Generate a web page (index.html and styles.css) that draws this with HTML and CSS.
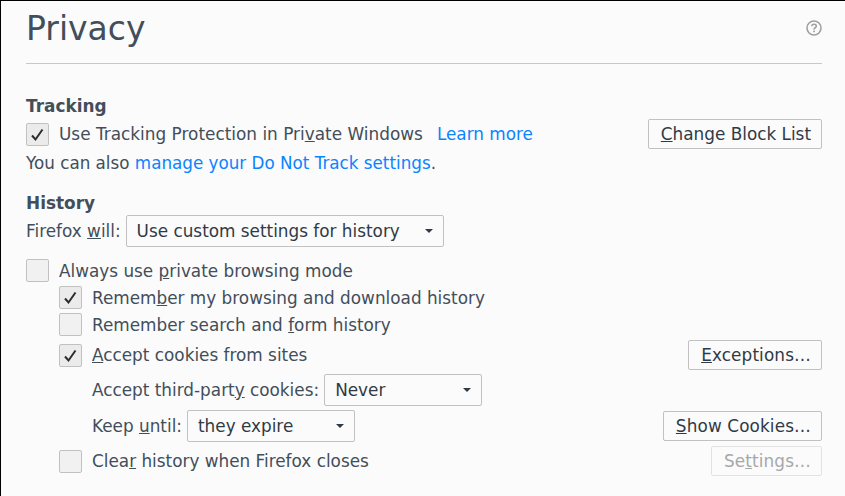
FILE: index.html
```html
<!DOCTYPE html>
<html lang="en">
<head>
<meta charset="utf-8">
<title>Privacy</title>
<link rel="stylesheet" href="styles.css">
</head>
<body>
<main class="pane">
  <header class="header">
    <h1 class="title">Privacy</h1>
    <svg class="help" width="16" height="16" viewBox="0 0 16 16" aria-hidden="true">
      <circle cx="8" cy="8" r="7" fill="none" stroke="#a0a0a0" stroke-width="1.6"/>
      <path d="M5.8 6.3c0-1.3 1-2.1 2.3-2.1s2.2.8 2.2 1.9c0 1.7-2.2 1.6-2.2 3.3" fill="none" stroke="#a0a0a0" stroke-width="1.6"/>
      <rect x="7.2" y="10.5" width="1.7" height="1.7" fill="#a0a0a0"/>
    </svg>
  </header>

  <section class="tracking">
    <h2 class="heading">Tracking</h2>
    <div class="row row-tp">
      <span class="check on"><svg width="15" height="15" viewBox="0 0 15 15"><path d="M2 8.5l3.5 4L12.5 2.5" fill="none" stroke="#2c2c2c" stroke-width="2"/></svg></span>
      <span class="label">Use Tracking Protection in Pri<u>v</u>ate Windows</span>
      <a class="link learn">Learn more</a>
      <button class="btn"><u>C</u>hange Block List</button>
    </div>
    <p class="line">You can also <a class="link">manage your Do Not Track settings</a>.</p>
  </section>

  <section class="history">
    <h2 class="heading">History</h2>
    <div class="row row-will">
      <span class="label">Firefox <u>w</u>ill:</span>
      <span class="select sel-history">Use custom settings for history<i class="arrow"></i></span>
    </div>
    <div class="row row-always">
      <span class="check"></span>
      <span class="label">Always use <u>p</u>rivate browsing mode</span>
    </div>
    <div class="indent">
      <div class="row row-r1">
        <span class="check on"><svg width="15" height="15" viewBox="0 0 15 15"><path d="M2 8.5l3.5 4L12.5 2.5" fill="none" stroke="#2c2c2c" stroke-width="2"/></svg></span>
        <span class="label">Remem<u>b</u>er my browsing and download history</span>
      </div>
      <div class="row row-r2">
        <span class="check"></span>
        <span class="label">Remember search and <u>f</u>orm history</span>
      </div>
      <div class="row row-cookies">
        <span class="check on"><svg width="15" height="15" viewBox="0 0 15 15"><path d="M2 8.5l3.5 4L12.5 2.5" fill="none" stroke="#2c2c2c" stroke-width="2"/></svg></span>
        <span class="label"><u>A</u>ccept cookies from sites</span>
        <button class="btn ell"><u>E</u>xceptions…</button>
      </div>
      <div class="row row-third sub">
        <span class="label">Accept third-part<u>y</u> cookies:</span>
        <span class="select sel-never">Never<i class="arrow"></i></span>
      </div>
      <div class="row row-keep sub">
        <span class="label">Keep <u>u</u>ntil:</span>
        <span class="select sel-expire">they expire<i class="arrow"></i></span>
        <button class="btn ell"><u>S</u>how Cookies…</button>
      </div>
      <div class="row row-clear">
        <span class="check"></span>
        <span class="label">Clea<u>r</u> history when Firefox closes</span>
        <button class="btn ell disabled" disabled>Se<u>t</u>tings…</button>
      </div>
    </div>
  </section>
</main>
</body>
</html>
```

FILE: styles.css
```css
* { box-sizing: border-box; }
html, body { margin: 0; height: 100%; }
body {
  background: #fbfbfb;
  font-family: "DejaVu Sans", sans-serif;
  font-size: 16.85px;
  color: #424e5a;
  overflow: hidden;
}
.pane {
  height: 496px;
  border-top: 1px solid #000;
  border-left: 1px solid #000;
  padding: 0 23px 0 25px;
}
.header {
  display: flex;
  justify-content: space-between;
  height: 63px;
  border-bottom: 1px solid #c8c8c8;
}
.title {
  margin: 0;
  font-size: 33px;
  font-weight: 400;
  line-height: 56px;
}
.help { margin-top: 19px; }
.heading {
  margin: 0;
  font-size: 16.9px;
  font-weight: 700;
  line-height: 20px;
}
.tracking { margin-top: 32px; }
.history { margin-top: 20px; }
.row { display: flex; align-items: center; }
.sub { padding-left: 33px; }
.check {
  flex: none;
  width: 23px;
  height: 23px;
  margin-right: 10px;
  display: flex;
  align-items: center;
  justify-content: center;
  background: #f1f1f1;
  border: 1px solid #c1c1c1;
  border-radius: 2px;
}
.check.on { background: #ebebeb; }
.label { white-space: nowrap; }
.row-tp .label { font-size: 16.9px; }
.link { color: #0a84ff; }
.learn { margin-left: 14px; }
.btn {
  flex: none;
  height: 30px;
  margin-left: auto;
  padding: 0 10px 0 12px;
  font: inherit;
  color: #2f3a45;
  background: #fbfbfb;
  border: 1px solid #c1c1c1;
  border-radius: 2px;
}
.btn.ell { letter-spacing: 0.12px; }
.btn.disabled { color: #a5a8ab; border-color: #e2e2e2; }
.select {
  position: relative;
  display: block;
  height: 32px;
  margin-left: 5px;
  padding-left: 10px;
  line-height: 30px;
  color: #2f3a45;
  background: #fbfbfb;
  border: 1px solid #c1c1c1;
  border-radius: 2px;
  white-space: nowrap;
}
.arrow {
  position: absolute;
  top: 13px;
  right: 10px;
  border-style: solid;
  border-width: 4px 4px 0;
  border-color: #2f3a45 transparent transparent;
}
.sel-history { width: 318px; }
.sel-never { width: 158px; }
.sel-expire { width: 168px; }
.line { margin: 0; line-height: 20px; margin-top: 4px; font-size: 16.75px; }
.row-tp { height: 30px; margin-top: 3px; }
.row-will { height: 32px; margin-top: 2px; }
.row-always { height: 23px; margin-top: 12px; }
.indent { margin-left: 33px; }
.row-r1 { height: 23px; margin-top: 4px; }
.row-r2 { height: 23px; margin-top: 4px; }
.row-cookies { height: 30px; margin-top: 4px; }
.row-third { height: 32px; margin-top: 4px; }
.row-keep { height: 32px; margin-top: 4px; }
.row-clear { height: 30px; margin-top: 4px; }
```
